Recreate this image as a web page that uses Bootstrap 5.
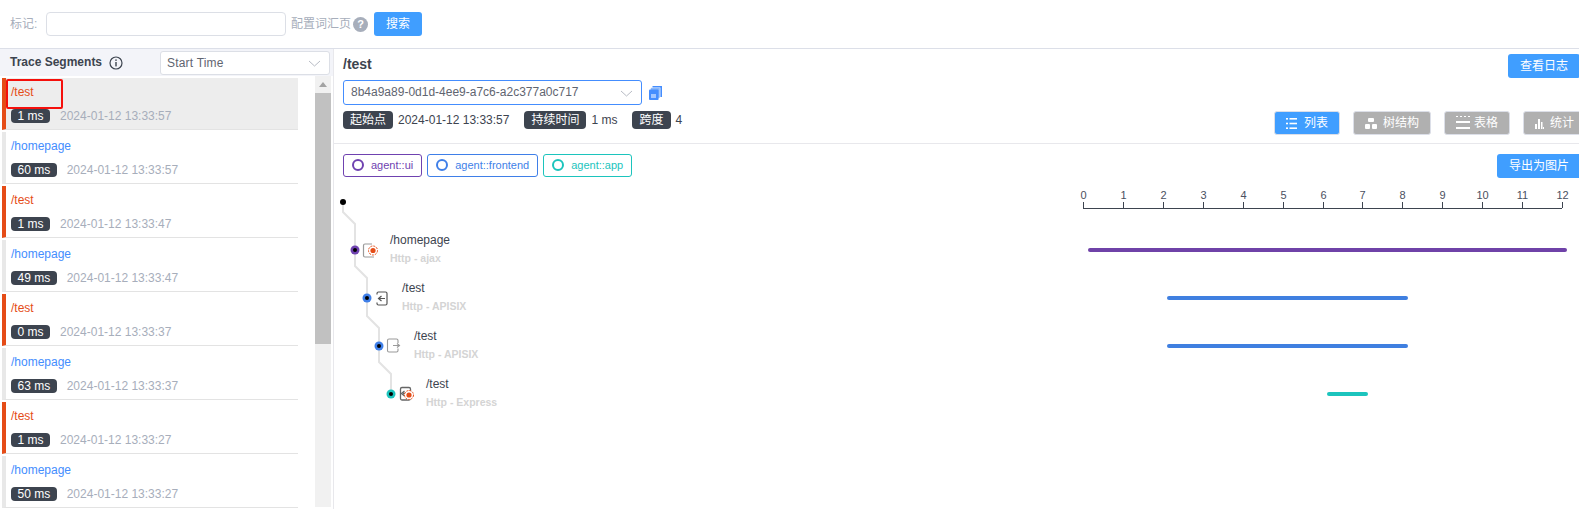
<!DOCTYPE html>
<html lang="zh">
<head>
  <meta charset="UTF-8" />
  <meta name="viewport" content="width=device-width, initial-scale=1">
  <title>Trace</title>
  <link href="https://cdn.jsdelivr.net/npm/bootstrap@5.3.3/dist/css/bootstrap.min.css" rel="stylesheet">
  <style>
    html, body { height: 509px; overflow: hidden; }
    body {
      font-family: "Liberation Sans", "Noto Sans CJK SC", sans-serif;
      font-size: 12px;
      color: #3d444f;
      background: #fff;
    }
    .top-bar { height: 49px; border-bottom: 1px solid #dcdfe8; padding-left: 10px; }
    .top-label { color: #a7aebb; width: 36px; }
    .top-input { width: 240px; height: 24px; padding: 0 8px; font-size: 12px; border-color: #dcdfe6; border-radius: 4px; }
    .vocab-link { color: #a7aebb; margin-left: 5px; }
    .help-dot {
      width: 15px; height: 15px; margin-left: 2px; border-radius: 50%;
      background: #a7aebb; color: #fff; font-size: 11px; font-weight: 700; line-height: 15px; text-align: center;
    }
    .blue-btn {
      background: #409eff; border: 0; color: #fff; font-size: 12px; border-radius: 3px;
      height: 24px; padding: 0 12px; line-height: 24px; white-space: nowrap;
    }
    .search-btn { margin-left: 6px; }
    .main-area { height: 460px; }
    .left-side { width: 334px; flex: none; border-right: 1px solid #e8e8ec; }
    .left-head { height: 27px; background: #f3f4f9; padding: 2px 3px 0 10px; }
    .left-title { font-weight: 700; color: #3d444f; margin-top: 2px; }
    .title-info { margin: 5px 0 0 7px; }
    .sel-box {
      border: 1px solid #dcdfe6; border-radius: 3px; background: #fff; color: #5f6570;
      font-size: 12px; padding: 0 7px; position: relative;
    }
    .sel-box svg { position: absolute; right: 8px; top: 50%; margin-top: -3px; }
    .order-sel { width: 170px; height: 24px; line-height: 22px; letter-spacing: .2px; padding-left: 6px; }
    .left-body { height: 433px; overflow: hidden; padding: 2px 0 0 2px; }
    .seg-list { width: 296px; flex: none; }
    .seg-item {
      margin-bottom: 2px; border-left: 4px solid #e8e8e8;
      border-bottom: 1px solid #e3e3e3; padding: 6px 0 0 5px; box-sizing: content-box; height: 45px;
    }
    .seg-item.err { border-left-color: #e54c17; }
    .seg-item.active { background: #ededed; }
    .seg-name { color: #448dfe; line-height: 16px; height: 16px; }
    .err .seg-name { color: #e54c17; }
    .seg-meta { margin-top: 9px; line-height: 14px; }
    .ms-tag {
      background: #3d444f; color: #fff; border-radius: 4px; padding: 0 6.5px; height: 14px;
      line-height: 14px; display: inline-block; margin-right: 10px;
    }
    .seg-time { color: #a7aebb; }
    .red-mark {
      position: absolute; left: 6px; top: 79px; width: 57px; height: 30px;
      border: 2px solid #f5100c; border-radius: 2px;
    }
    .fake-scroll { width: 16px; margin-left: 17px; background: #f1f1f1; height: 100%; margin-top: -2px; }
    .scroll-up { height: 17px; }
    .scroll-thumb { height: 251px; background: #c1c1c1; }
    .right-side { width: 1256px; flex: none; }
    .right-top { height: 95px; padding: 5px 0 0 9px; border-bottom: 1px solid #e8e8ec; width: 1245px; position: relative; }
    .right-head { width: 1247px; }
    .trace-title { font-size: 14px; font-weight: 700; line-height: 18px; margin-top: 1px; color: #3d444f; }
    .log-btn { padding: 0 12px; height: 24px; width: 72px; margin-right: 10px; }
    .trace-row { height: 25px; margin-top: 2px; }
    .trace-sel {
      width: 299px; height: 25px; line-height: 23px; border-color: #448dfe; color: #5f6570;
      border-radius: 3px;
    }
    .copy-icon { margin-left: 7px; }
    .info-row { margin-top: 6px; width: 1247px; }
    .info-tag {
      background: #3d444f; color: #fff; border-radius: 4px; padding: 0 7px; height: 18px;
      line-height: 18px; margin-right: 5px; font-size: 12px;
    }
    .info-val { margin-right: 15px; line-height: 18px; }
    .mode-group { padding-right: 4px; }
    .mode-btn {
      height: 24px; border: 1px solid #dcdfe8; background: #b0b0b0; color: #fff; border-radius: 3px;
      padding: 0 11px; margin-left: 13px; font-size: 12px; line-height: 22px; white-space: nowrap;
    }
    .mode-btn svg { margin-right: 6px; vertical-align: -2px; }
    .mode-btn svg.tight { margin-right: 4px; }
    .mode-btn.on { background: #409eff; }
    .mode-btn.on svg { margin-right: 7px; }
    .legend-row { padding: 10px 0 0 9px; width: 1247px; }
    .svc-tag {
      height: 23px; border: 1px solid; border-radius: 3px; padding: 0 8px; margin-right: 5px;
      font-size: 11px; line-height: 21px;
    }
    .svc-tag i { display: inline-block; width: 12px; height: 12px; border: 2px solid; border-radius: 50%; margin-right: 7px; vertical-align: -2px; }
    .svc-ui { color: #6f42b0; }
    .svc-fe { color: #3f7fe8; }
    .svc-app { color: #1cc4bd; }
    .export-btn { width: 84px; height: 24px; padding: 0 12px; margin-left: auto; }
    .trace-map { display: block; margin-top: 2px; }
    .trace-map text { font-family: "Liberation Sans", sans-serif; }
  </style>
</head>
<body>

  <!-- top search bar -->
  <div class="top-bar d-flex align-items-center">
    <span class="top-label">标记:</span>
    <input type="text" class="form-control top-input">
    <span class="vocab-link">配置词汇页</span>
    <span class="help-dot">?</span>
    <button class="blue-btn search-btn">搜索</button>
  </div>

  <div class="main-area d-flex">
    <!-- segment list -->
    <div class="left-side">
      <div class="left-head d-flex align-items-start">
        <span class="left-title">Trace Segments</span>
        <svg class="title-info" width="14" height="14" viewBox="0 0 14 14"><circle cx="7" cy="7" r="6" fill="none" stroke="#3d444f" stroke-width="1.2"/><rect x="6.3" y="6" width="1.4" height="4.4" fill="#3d444f"/><rect x="6.3" y="3.4" width="1.4" height="1.5" fill="#3d444f"/></svg>
        <div class="sel-box order-sel ms-auto">Start Time
          <svg width="13" height="7" viewBox="0 0 13 7"><path d="M1 1l5.5 5L12 1" fill="none" stroke="#b8bcc5"/></svg>
        </div>
      </div>
      <div class="left-body d-flex">
        <div class="seg-list" id="segList"></div>
        <div class="fake-scroll">
          <div class="scroll-up d-flex justify-content-center align-items-center">
            <svg width="8" height="5" viewBox="0 0 8 5"><path d="M4 0l4 5H0z" fill="#a3a3a3"/></svg>
          </div>
          <div class="scroll-thumb"></div>
        </div>
      </div>
    </div>

    <!-- trace detail -->
    <div class="right-side">
      <div class="right-top">
        <div class="right-head d-flex justify-content-between align-items-start">
          <div class="trace-title">/test</div>
          <button class="blue-btn log-btn">查看日志</button>
        </div>
        <div class="trace-row d-flex align-items-center">
          <div class="sel-box trace-sel">8b4a9a89-0d1d-4ee9-a7c6-a2c377a0c717
            <svg width="13" height="7" viewBox="0 0 13 7"><path d="M1 1l5.5 5L12 1" fill="none" stroke="#b8bcc5"/></svg>
          </div>
          <svg class="copy-icon" width="13" height="14" viewBox="0 0 13 14"><path d="M3.500 0H13v11h-1.600V1.600H3.500z" fill="#448dfe"/><rect x="1.800" y="1.800" width="9" height="10" fill="#8ab8fb"/><rect x="0" y="3.500" width="9.600" height="10.500" rx="1" fill="#448dfe"/><rect x="2" y="8.500" width="5" height="1" fill="#fff"/><rect x="2" y="10.500" width="5" height="1" fill="#fff"/></svg>
        </div>
        <div class="info-row d-flex align-items-start">
          <span class="info-tag">起始点</span><span class="info-val">2024-01-12 13:33:57</span>
          <span class="info-tag">持续时间</span><span class="info-val">1 ms</span>
          <span class="info-tag">跨度</span><span class="info-val">4</span>
          <div class="mode-group ms-auto d-flex">
            <button class="mode-btn on"><svg width="11" height="11" viewBox="0 0 11 11" fill="#fff"><rect x="0" y="0" width="2" height="1.600"/><rect x="3.500" y="0" width="7.500" height="1.600"/><rect x="0" y="4.700" width="2" height="1.600"/><rect x="3.500" y="4.700" width="7.500" height="1.600"/><rect x="0" y="9.400" width="2" height="1.600"/><rect x="3.500" y="9.400" width="7.500" height="1.600"/></svg>列表</button>
            <button class="mode-btn"><svg width="12" height="11" viewBox="0 0 12 11" fill="#fff"><rect x="3" y="0" width="6" height="4" rx="1"/><rect x="0" y="6" width="5" height="5" rx="1"/><rect x="7" y="6" width="5" height="5" rx="1"/></svg>树结构</button>
            <button class="mode-btn"><svg class="tight" width="14" height="13" viewBox="0 0 14 13" fill="#fff"><rect x="0" y="0" width="2" height="1"/><rect x="4" y="0" width="2" height="1"/><rect x="8" y="0" width="2" height="1"/><rect x="12" y="0" width="2" height="1"/><rect x="0" y="5" width="14" height="2"/><rect x="0" y="11" width="14" height="2"/></svg>表格</button>
            <button class="mode-btn"><svg width="9" height="10" viewBox="0 0 9 10" fill="#fff"><rect x="0" y="5" width="2" height="5"/><rect x="3" y="0" width="2" height="10"/><rect x="6" y="3" width="1.500" height="7"/><rect x="8" y="8" width="1" height="2"/></svg>统计</button>
          </div>
        </div>
      </div>

      <div class="legend-row d-flex align-items-start">
        <span class="svc-tag svc-ui"><i></i>agent::ui</span>
        <span class="svc-tag svc-fe"><i></i>agent::frontend</span>
        <span class="svc-tag svc-app"><i></i>agent::app</span>
        <button class="blue-btn export-btn">导出为图片</button>
      </div>

      <!-- span diagram -->
      <svg class="trace-map" width="1245" height="270" viewBox="334 180 1245 270">
        <g fill="none" stroke="#e3e3e3" stroke-width="2">
          <path d="M343 202v10l12 12v26"/>
          <path d="M355 250v16l12 12v20"/>
          <path d="M367 298v18l12 12v18"/>
          <path d="M379 346v16l12 12v20"/>
        </g>
        <circle cx="343" cy="202" r="3" fill="#000"/>
        <g id="axis"></g>

        <circle cx="355" cy="250" r="4.500" fill="#6f42b0"/><circle cx="355" cy="250" r="2" fill="#000"/>
        <circle cx="367" cy="298" r="4.500" fill="#3f7fe8"/><circle cx="367" cy="298" r="2" fill="#000"/>
        <circle cx="379" cy="346" r="4.500" fill="#3f7fe8"/><circle cx="379" cy="346" r="2" fill="#000"/>
        <circle cx="391" cy="394" r="4.500" fill="#1cc4bd"/><circle cx="391" cy="394" r="2" fill="#000"/>

        <!-- exit with error -->
        <path d="M372 244h-7a1.500 1.500 0 0 0-1.500 1.500v10a1.500 1.500 0 0 0 1.500 1.500h9" fill="none" stroke="#9a9a9a" stroke-width="1.200"/>
        <circle cx="373" cy="250.500" r="4.500" fill="#fff" stroke="#e54c17" stroke-dasharray="2 1"/><circle cx="373" cy="250.500" r="2.600" fill="#e54c17"/>
        <!-- entry -->
        <g fill="none" stroke="#555" stroke-width="1.200">
          <path d="M377 294.500v-1a1.500 1.500 0 0 1 1.500-1.500h7a1.500 1.500 0 0 1 1.500 1.500v10a1.500 1.500 0 0 1-1.500 1.500h-7a1.500 1.500 0 0 1-1.500-1.500v-1"/>
          <path d="M385 298.500h-6M381.500 296l-3 2.500 3 2.500"/>
        </g>
        <!-- exit -->
        <g fill="none" stroke="#9a9a9a" stroke-width="1.100">
          <path d="M398 343v-2.500a1.500 1.500 0 0 0-1.500-1.500h-7.500a1.500 1.500 0 0 0-1.500 1.500v10a1.500 1.500 0 0 0 1.500 1.500h7.500a1.500 1.500 0 0 0 1.500-1.500v-2"/>
          <path d="M393 345.500h6M397 343.500l2.500 2-2.500 2"/>
        </g>
        <!-- entry with error -->
        <g fill="none" stroke="#666" stroke-width="1.300">
          <rect x="400.500" y="387.500" width="10" height="12.500" rx="1.500"/>
          <path d="M408 393.500h-5M404.500 391l-3 2.500 3 2.500"/>
        </g>
        <circle cx="409" cy="395" r="4.500" fill="#fff" stroke="#e54c17" stroke-dasharray="2 1"/><circle cx="409" cy="395" r="2.600" fill="#e54c17"/>

        <g font-size="12" fill="#3d444f">
          <text x="390" y="244">/homepage</text>
          <text x="402" y="292">/test</text>
          <text x="414" y="340">/test</text>
          <text x="426" y="388">/test</text>
        </g>
        <g font-size="10.500" font-weight="700" fill="#d4d4d4">
          <text x="390" y="262">Http - ajax</text>
          <text x="402" y="310">Http - APISIX</text>
          <text x="414" y="358">Http - APISIX</text>
          <text x="426" y="406">Http - Express</text>
        </g>

        <g stroke-width="4" stroke-linecap="round">
          <line x1="1090" y1="250" x2="1565" y2="250" stroke="#6f42a8"/>
          <line x1="1169" y1="298" x2="1406" y2="298" stroke="#3f7fe0"/>
          <line x1="1169" y1="346" x2="1406" y2="346" stroke="#3f7fe0"/>
          <line x1="1329" y1="394" x2="1366" y2="394" stroke="#1cc4bd"/>
        </g>
      </svg>
    </div>
  </div>

  <div class="red-mark"></div>

  <script>
    const segs = [
      ["/test", 1, "57"], ["/homepage", 60, "57"],
      ["/test", 1, "47"], ["/homepage", 49, "47"],
      ["/test", 0, "37"], ["/homepage", 63, "37"],
      ["/test", 1, "27"], ["/homepage", 50, "27"]
    ];
    document.getElementById("segList").innerHTML = segs.map((s, i) => `
      <div class="seg-item ${s[0] === "/test" ? "err" : ""} ${i === 0 ? "active" : ""}">
        <div class="seg-name">${s[0]}</div>
        <div class="seg-meta"><span class="ms-tag">${s[1]} ms</span><span class="seg-time">2024-01-12 13:33:${s[2]}</span></div>
      </div>`).join("");

    // time axis, 0 to 12
    let axis = `<path d="M1083 208.500H1562" stroke="#3d444f" stroke-width="1"/>`;
    for (let i = 0; i <= 12; i++) {
      const x = Math.round(1083 + i * 39.92) + 0.5;
      axis += `<line x1="${x}" y1="202" x2="${x}" y2="208" stroke="#3d444f"/>`;
      axis += `<text x="${x}" y="199" font-size="11" text-anchor="middle" fill="#4a5060">${i}</text>`;
    }
    document.getElementById("axis").innerHTML = axis;
  </script>

  <script src="https://cdn.jsdelivr.net/npm/bootstrap@5.3.3/dist/js/bootstrap.bundle.min.js"></script>
</body>
</html>
